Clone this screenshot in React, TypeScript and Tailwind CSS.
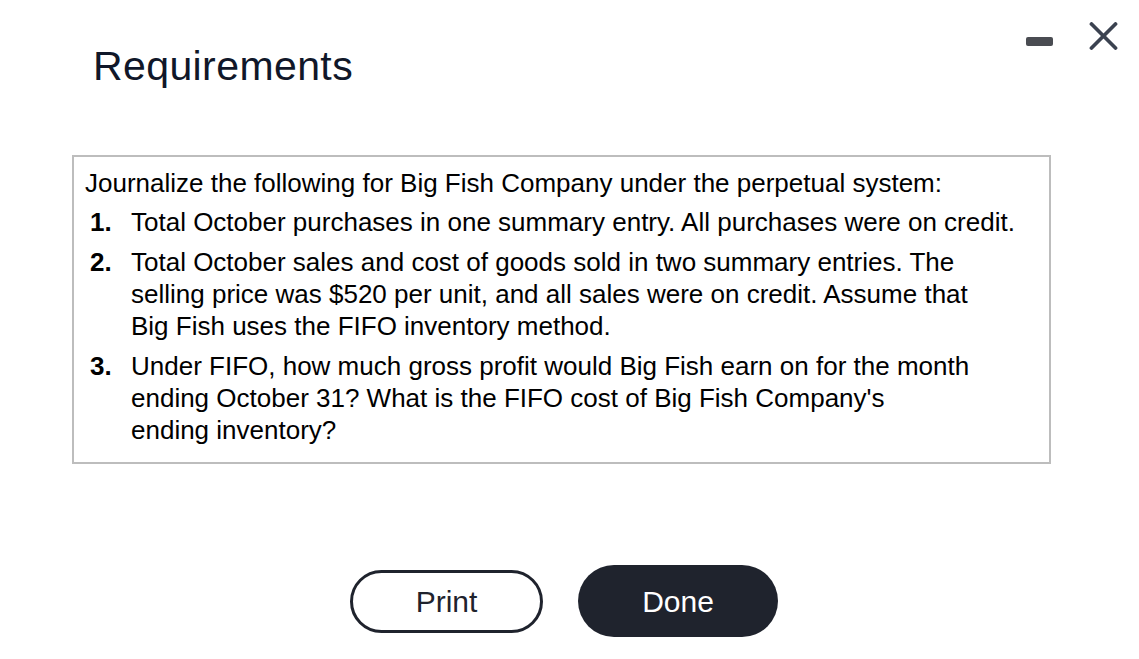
import React from 'react';

const ITEMS: { n: string; lines: string[] }[] = [
  {
    n: '1.',
    lines: ['Total October purchases in one summary entry. All purchases were on credit.'],
  },
  {
    n: '2.',
    lines: [
      'Total October sales and cost of goods sold in two summary entries. The',
      'selling price was $520 per unit, and all sales were on credit. Assume that',
      'Big Fish uses the FIFO inventory method.',
    ],
  },
  {
    n: '3.',
    lines: [
      'Under FIFO, how much gross profit would Big Fish earn on for the month',
      "ending October 31? What is the FIFO cost of Big Fish Company's",
      'ending inventory?',
    ],
  },
];

const App: React.FC = () => {
  return (
    <div className="w-[1139px] h-[659px] bg-white overflow-hidden font-['Liberation_Sans',Arial,sans-serif]">
      {/* header */}
      <div className="flex justify-between">
        <h1 className="pl-[93px] pt-[46px] text-[41px] leading-none tracking-[0.4px] text-[#101729] font-normal">
          Requirements
        </h1>
        <div className="flex items-start pt-[22px] pr-[21px]">
          <button className="mt-[15px] w-[27px] h-[9px] rounded-[2px] bg-[#4a4c52]" aria-label="Minimize" />
          <button className="ml-[36px] w-[29px] h-[28px]" aria-label="Close">
            <svg viewBox="0 0 29 28" className="w-[29px] h-[28px]" fill="none" stroke="#3b4250" strokeWidth="3.8" strokeLinecap="round">
              <path d="M2.5 2 L26.5 26" />
              <path d="M26.5 2 L2.5 26" />
            </svg>
          </button>
        </div>
      </div>

      {/* requirements box */}
      <div className="ml-[72px] mt-[68px] w-[979px] h-[309px] border-2 border-[#bdbdbd] pl-[11px] pt-[10px] text-[26px] leading-[32px] text-black">
        <p className="whitespace-nowrap">
          Journalize the following for Big Fish Company under the perpetual system:
        </p>
        <ol className="mt-[7px] pl-[5px] flex flex-col gap-[8px]">
          {ITEMS.map((item) => (
            <li key={item.n} className="flex">
              <span className="w-[41px] shrink-0 font-bold">{item.n}</span>
              <span className="whitespace-nowrap">
                {item.lines.map((l, i) => (
                  <React.Fragment key={i}>
                    {i > 0 && <br />}
                    {l}
                  </React.Fragment>
                ))}
              </span>
            </li>
          ))}
        </ol>
      </div>

      {/* buttons */}
      <div className="mt-[101px] pl-[350px] flex items-center gap-[35px]">
        <button className="w-[193px] h-[63px] rounded-full border-[3px] border-[#1f232d] text-[30px] text-[#1f232d] bg-white">
          Print
        </button>
        <button className="w-[200px] h-[72px] rounded-full bg-[#1f232d] text-[30px] text-white">
          Done
        </button>
      </div>
    </div>
  );
};

export default App;
